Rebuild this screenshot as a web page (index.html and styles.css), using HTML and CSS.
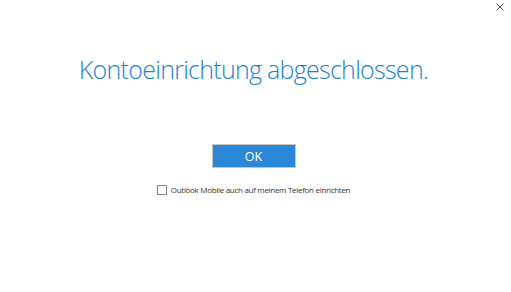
FILE: index.html
```html
<!DOCTYPE html>
<html lang="de">
<head>
<meta charset="utf-8">
<title>Konto</title>
<link rel="stylesheet" href="styles.css">
</head>
<body>
<div class="window">
  <button class="close" aria-label="Schließen">
    <svg width="8" height="8" viewBox="0 0 8 8"><path d="M0.5 0.5 L7.5 7.5 M7.5 0.5 L0.5 7.5" stroke="#555" stroke-width="1" fill="none"/></svg>
  </button>
  <main class="content">
    <h1 class="title">Kontoeinrichtung abgeschlossen.</h1>
    <button class="ok">OK</button>
    <label class="check">
      <span class="box"></span>
      <span class="label-text">Outlook Mobile auch auf meinem Telefon einrichten</span>
    </label>
  </main>
</div>
</body>
</html>
```

FILE: styles.css
```css
html, body {
  margin: 0;
  padding: 0;
  background: #ffffff;
}
.window {
  position: relative;
  width: 511px;
  height: 292px;
  background: #fff;
  font-family: "Open Sans", "Noto Sans", sans-serif;
}
.close {
  position: absolute;
  top: 2px;
  right: 5px;
  width: 12px;
  height: 10px;
  padding: 0;
  border: 0;
  background: transparent;
  display: flex;
  align-items: center;
  justify-content: center;
}
.content {
  display: flex;
  flex-direction: column;
  align-items: center;
  padding-top: 53px;
  padding-right: 4px;
}
.title {
  margin: 0;
  font-weight: 300;
  font-size: 25px;
  line-height: 32px;
  color: #1a82d4;
  letter-spacing: -0.72px;
}
.ok {
  margin-top: 59px;
  width: 84px;
  height: 24px;
  border: 1px solid #c9c4bf;
  background: #2b88d8;
  color: #fff;
  font-family: "Open Sans", "Noto Sans", sans-serif;
  font-size: 12.5px;
  padding: 0;
}
.check {
  margin-top: 16px;
  display: flex;
  align-items: center;
  gap: 4px;
  font-size: 8px;
  letter-spacing: -0.3px;
  color: #333;
}
.box {
  width: 8px;
  height: 8px;
  border: 1px solid #8a8a8a;
  background: #fff;
}
```
